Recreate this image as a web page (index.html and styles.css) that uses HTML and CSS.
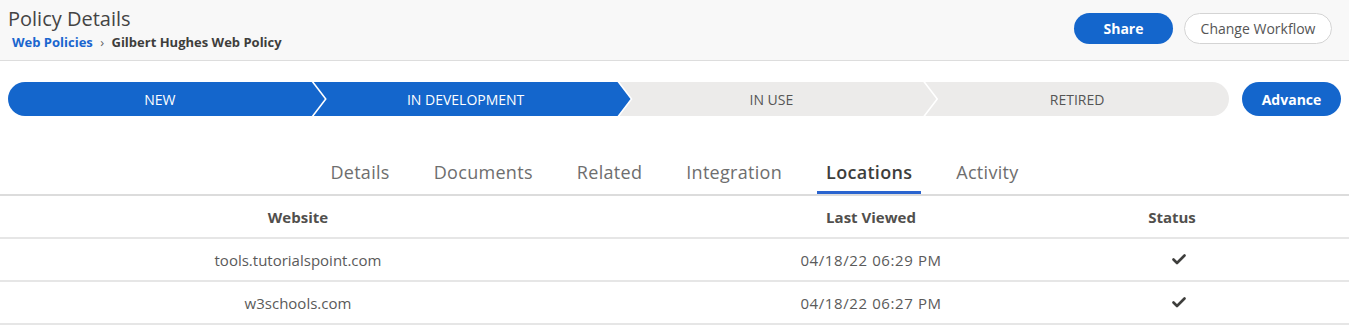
FILE: index.html
```html
<!DOCTYPE html>
<html lang="en">
<head>
    <meta charset="UTF-8">
    <meta name="viewport" content="width=device-width, initial-scale=1.0">
    <title>Policy Details</title>
    <link rel="stylesheet" href="styles.css">
</head>
<body>

<div class="header">
    <div class="title-block">
        <h1>Policy Details</h1>
        <div class="breadcrumb">
            <a href="#">Web Policies</a>
            <span class="crumb-sep">&#8250;</span>
            <span class="crumb-current">Gilbert Hughes Web Policy</span>
        </div>
    </div>
    <div class="header-actions">
        <button class="btn btn-primary">Share</button>
        <button class="btn btn-outline">Change Workflow</button>
    </div>
</div>

<div class="path-row">
    <div class="path">
        <div class="step done">NEW</div>
        <div class="step done">IN DEVELOPMENT</div>
        <div class="step">IN USE</div>
        <div class="step">RETIRED</div>
    </div>
    <button class="btn btn-primary btn-advance">Advance</button>
</div>

<div class="tabs">
    <div class="tab">Details</div>
    <div class="tab">Documents</div>
    <div class="tab">Related</div>
    <div class="tab">Integration</div>
    <div class="tab active">Locations</div>
    <div class="tab">Activity</div>
</div>

<div class="table">
    <div class="row head">
        <div class="cell">Website</div>
        <div class="cell">Last Viewed</div>
        <div class="cell status">Status</div>
    </div>
    <div class="row">
        <div class="cell">tools.tutorialspoint.com</div>
        <div class="cell date">04/18/22 06:29 PM</div>
        <div class="cell status">
            <svg class="check" width="14" height="11" viewBox="0 0 14 11"><path d="M1.5 5.5 L5 9 L12.5 1.5" fill="none" stroke="#3e3e3c" stroke-width="2.6" stroke-linecap="round" stroke-linejoin="round"/></svg>
        </div>
    </div>
    <div class="row">
        <div class="cell">w3schools.com</div>
        <div class="cell date">04/18/22 06:27 PM</div>
        <div class="cell status">
            <svg class="check" width="14" height="11" viewBox="0 0 14 11"><path d="M1.5 5.5 L5 9 L12.5 1.5" fill="none" stroke="#3e3e3c" stroke-width="2.6" stroke-linecap="round" stroke-linejoin="round"/></svg>
        </div>
    </div>
</div>

</body>
</html>
```

FILE: styles.css
```css
body {
    font-family: "Open Sans", Arial, sans-serif;
    margin: 0;
    padding: 0;
    background-color: #fff;
    color: #3e3e3c;
}

.header {
    display: flex;
    justify-content: space-between;
    align-items: flex-start;
    background-color: #f8f8f8;
    border-bottom: 1px solid #dddddd;
    height: 60px;
    padding: 0 17px 0 8px;
}
.title-block {
    padding-top: 6px;
}
h1 {
    margin: 0;
    font-size: 20px;
    font-weight: 400;
    line-height: 26px;
    color: #444;
}
.breadcrumb {
    font-size: 13px;
    font-weight: 700;
    line-height: 20px;
    padding-left: 4px;
}
.breadcrumb a {
    color: #1a66cf;
    text-decoration: none;
}
.crumb-sep {
    color: #666;
    margin: 0 4px 0 4px;
    font-weight: 400;
}
.crumb-current {
    color: #3e3e3c;
}
.header-actions {
    display: flex;
    gap: 11px;
    padding-top: 13px;
}

.btn {
    font-family: "Open Sans", Arial, sans-serif;
    height: 31px;
    border-radius: 16px;
    font-size: 14px;
    cursor: pointer;
    padding: 0;
}
.btn-primary {
    background-color: #1466cc;
    color: #fff;
    border: none;
    font-weight: 700;
    width: 99px;
}
.btn-outline {
    background-color: #fff;
    color: #555;
    border: 1px solid #d4d4d4;
    width: 148px;
}

.path-row {
    display: flex;
    align-items: center;
    gap: 13px;
    padding: 21px 8px 0 8px;
}
.path {
    flex: 1;
    display: flex;
    height: 34px;
    border-radius: 17px;
    overflow: hidden;
}
.step {
    flex: 1;
    display: flex;
    align-items: center;
    justify-content: center;
    font-size: 14px;
    background-color: #ecebea;
    color: #555;
    margin-left: -11px;
    padding-right: 13px;
    clip-path: polygon(0 0, calc(100% - 13px) 0, 100% 50%, calc(100% - 13px) 100%, 0 100%, 13px 50%);
}
.step:first-child {
    margin-left: 0;
    clip-path: polygon(0 0, calc(100% - 13px) 0, 100% 50%, calc(100% - 13px) 100%, 0 100%);
}
.step:last-child {
    margin-right: -13px;
}
.step.done {
    background-color: #1466cc;
    color: #fff;
}
.btn-advance {
    height: 34px;
    border-radius: 17px;
}

.tabs {
    display: flex;
    justify-content: center;
    gap: 26px;
    margin-top: 44px;
    border-bottom: 2px solid #dcdcdc;
}
.tab {
    font-size: 18px;
    letter-spacing: 0.3px;
    line-height: 24px;
    color: #6e6e6e;
    padding: 0 9px 7px 9px;
    border-bottom: 3px solid transparent;
}
.tab.active {
    color: #3e3e3c;
    font-weight: 600;
    border-bottom-color: #2a64cf;
}

.row {
    display: grid;
    grid-template-columns: 596px 550px 1fr;
    height: 41px;
    border-bottom: 2px solid #e6e6e6;
    align-items: center;
}
.cell {
    text-align: center;
    font-size: 15px;
    color: #5a5a5a;
}
.cell.date {
    letter-spacing: 0.6px;
}
.head .cell {
    font-weight: 700;
    color: #514f4d;
}
.cell.status {
    padding-right: 151px;
    line-height: 0;
}
.head .cell.status {
    line-height: normal;
}
.check {
    margin-left: 14px;
}
```
